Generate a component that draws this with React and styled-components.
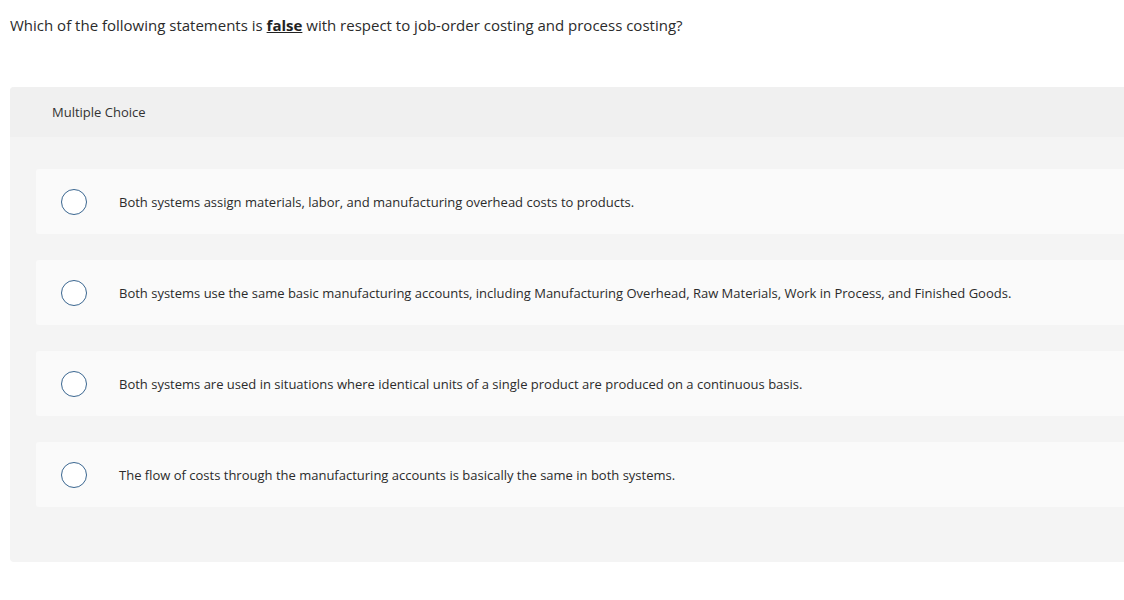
import React from "react"
import styled, { createGlobalStyle } from "styled-components"

const GlobalStyle = createGlobalStyle`
  body {
    margin: 0;
    background: #fff;
    overflow: hidden;
    font-family: "Open Sans", Lato, Arial, sans-serif;
    color: #333;
  }
`

const Page = styled.div`
  width: 1124px;
  height: 600px;
  overflow: hidden;
  padding-left: 10px;
  box-sizing: border-box;
`
const Question = styled.p`
  margin: 0;
  padding-top: 15px;
  font-size: 15px;
  line-height: 20px;
  color: #2b2b2b;
  strong {
    text-decoration: underline;
    font-weight: bold;
    color: #222;
  }
`
const Panel = styled.div`
  margin-top: 52px;
  width: 1140px;
  border-radius: 4px;
  background: #f4f4f4;
  overflow: hidden;
`
const PanelHeader = styled.div`
  height: 50px;
  display: flex;
  align-items: center;
  padding-left: 42px;
  background: #f0f0f0;
  font-size: 13px;
  color: #333;
`
const OptionList = styled.div`
  display: flex;
  flex-direction: column;
  gap: 26px;
  padding: 32px 0 55px 26px;
`
const Option = styled.label`
  height: 65px;
  display: flex;
  align-items: center;
  background: #fafafa;
  border-radius: 3px;
  cursor: pointer;
`
const Radio = styled.span`
  width: 24px;
  height: 24px;
  margin-left: 25px;
  border: 1.5px solid #3a6690;
  border-radius: 50%;
  background: #fff;
  flex-shrink: 0;
`
const OptionText = styled.span`
  margin-left: 32px;
  padding-top: 1px;
  font-size: 13px;
  color: #2b2b2b;
`

const options = [
  "Both systems assign materials, labor, and manufacturing overhead costs to products.",
  "Both systems use the same basic manufacturing accounts, including Manufacturing Overhead, Raw Materials, Work in Process, and Finished Goods.",
  "Both systems are used in situations where identical units of a single product are produced on a continuous basis.",
  "The flow of costs through the manufacturing accounts is basically the same in both systems.",
]

const App = () => (
  <Page>
    <GlobalStyle />
    <Question>
      Which of the following statements is <strong>false</strong> with respect to job-order
      costing and process costing?
    </Question>
    <Panel>
      <PanelHeader>Multiple Choice</PanelHeader>
      <OptionList>
        {options.map(text => (
          <Option key={text}>
            <Radio />
            <OptionText>{text}</OptionText>
          </Option>
        ))}
      </OptionList>
    </Panel>
  </Page>
)

export default App
